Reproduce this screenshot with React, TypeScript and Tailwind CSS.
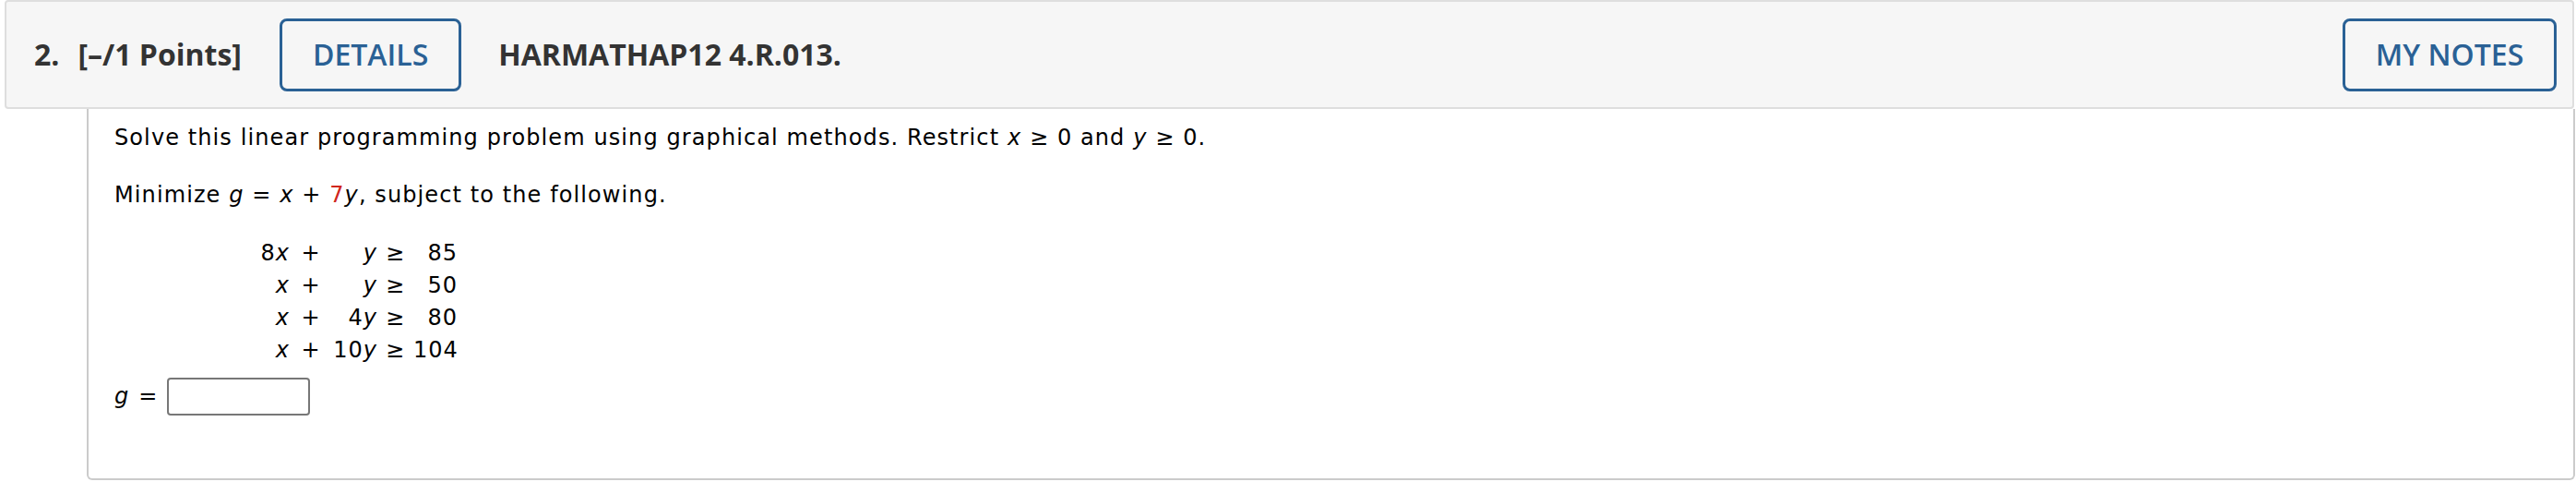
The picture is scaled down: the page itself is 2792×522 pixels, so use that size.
import React from "react";

const rows = [
    { a: "8", b: "", c: "85" },
    { a: "", b: "", c: "50" },
    { a: "", b: "4", c: "80" },
    { a: "", b: "10", c: "104" },
];

export default function App() {
    return (
        <div className="w-[2792px] h-[522px] bg-white flex flex-col">
            {/* Question header */}
            <div className="ml-[5px] mr-[2px] h-[118px] flex items-center border-2 border-[#dedede] bg-[#f6f6f6] rounded-[4px] pl-[30px] pr-[17px] font-['Open_Sans',sans-serif] text-[32px] text-[#333]">
                <span className="font-bold">2.</span>
                <span className="ml-[20px] font-bold">[–/1 Points]</span>
                <button className="ml-[41px] h-[79px] px-[33px] border-[3px] border-[#2a6195] rounded-[8px] text-[#2a6195] font-semibold bg-transparent">
                    DETAILS
                </button>
                <span className="ml-[40px] font-bold">HARMATHAP12 4.R.013.</span>
                <button className="ml-auto h-[79px] w-[232px] border-[3px] border-[#2a6195] rounded-[8px] text-[#2a6195] font-semibold bg-transparent">
                    MY NOTES
                </button>
            </div>

            {/* Question body */}
            <div className="ml-[94px] mr-px flex-1 mb-[2px] border-x-2 border-b-2 border-[#cbcbcb] rounded-b-[6px] pl-[28px] pt-[14px] font-['DejaVu_Sans',sans-serif] text-[24px] leading-[35px] text-black">
                <p className="tracking-[1.1px]">
                    Solve this linear programming problem using graphical methods. Restrict <i>x</i> ≥ 0 and <i>y</i> ≥ 0.
                </p>
                <p className="mt-[27px] tracking-[1.1px]">
                    Minimize <i>g</i> = <i>x</i> + <span className="text-[#d0261b]">7</span>
                    <i>y</i>, subject to the following.
                </p>

                <div className="mt-[28px] ml-[155px] grid grid-cols-[35px_46px_49px_39px_48px] tracking-[1px]">
                    {rows.map((r, i) => (
                        <React.Fragment key={i}>
                            <span className="text-right">
                                {r.a}
                                <i>x</i>
                            </span>
                            <span className="text-center">+</span>
                            <span className="text-right">
                                {r.b}
                                <i>y</i>
                            </span>
                            <span className="text-center">≥</span>
                            <span className="text-right">{r.c}</span>
                        </React.Fragment>
                    ))}
                </div>

                <div className="mt-[12px] flex items-center">
                    <i>g</i>
                    <span className="ml-[11px]">=</span>
                    <input
                        type="text"
                        className="ml-[11px] w-[155px] h-[41px] border-2 border-[#777] rounded-[4px] bg-white"
                    />
                </div>
            </div>
        </div>
    );
}
